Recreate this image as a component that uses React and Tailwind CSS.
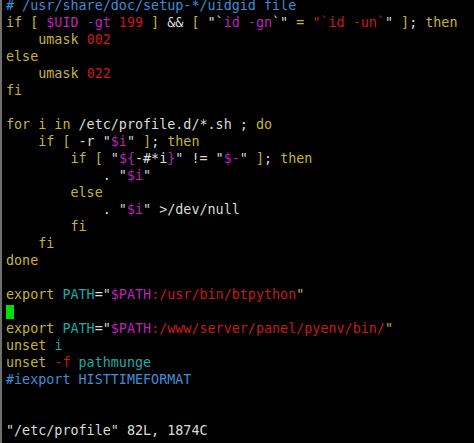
import React from 'react';

const C = {
  c: 'text-[#3d8fd8]',
  y: 'text-[#c8b432]',
  r: 'text-[#c81a1c]',
  m: 'text-[#bb22bb]',
  t: 'text-[#1fa8a8]',
  w: 'text-[#dcdcdc]',
};

const lines = [
  [['# /usr/share/doc/setup-*/uidgid file', 'c']],
  [['if [ ', 'y'], ['$UID -gt', 'm'], [' 199', 'r'], [' ] ', 'y'], ['&&', 'w'], [' [ ', 'y'], ['"`', 'w'], ['id -gn', 'm'], ['`"', 'w'], [' = ', 'y'], ['"`id -un`', 'r'], ['"', 'w'], [' ]', 'y'], ['; ', 'w'], ['then', 'y']],
  [['    umask ', 'y'], ['002', 'r']],
  [['else', 'y']],
  [['    umask ', 'y'], ['022', 'r']],
  [['fi', 'y']],
  [],
  [['for i in ', 'y'], ['/etc/profile.d/*.sh ; ', 'w'], ['do', 'y']],
  [['    if [ ', 'y'], ['-r "', 'w'], ['$i', 'm'], ['" ', 'w'], [']', 'y'], ['; ', 'w'], ['then', 'y']],
  [['        if [ ', 'y'], ['"', 'w'], ['${', 'm'], ['-#*i', 'w'], ['}', 'm'], ['" != "', 'w'], ['$-', 'm'], ['" ', 'w'], [']', 'y'], ['; ', 'w'], ['then', 'y']],
  [['            . "', 'w'], ['$i', 'm'], ['"', 'w']],
  [['        else', 'y']],
  [['            . "', 'w'], ['$i', 'm'], ['" >/dev/null', 'w']],
  [['        fi', 'y']],
  [['    fi', 'y']],
  [['done', 'y']],
  [],
  [['export ', 'y'], ['PATH', 't'], ['="', 'w'], ['$PATH', 'm'], [':/usr/bin/btpython', 'r'], ['"', 'y']],
  'cursor',
  [['export ', 'y'], ['PATH', 't'], ['="', 'w'], ['$PATH', 'm'], [':/www/server/panel/pyenv/bin/', 'r'], ['"', 'y']],
  [['unset ', 'y'], ['i', 't']],
  [['unset ', 'y'], ['-f', 'r'], [' pathmunge', 't']],
  [['#iexport HISTTIMEFORMAT', 'c']],
  [],
  [],
  [['"/etc/profile" 82L, 1874C', 'w']],
];

const App = () => {
  return (
    <div className="h-[443px] w-[474px] overflow-hidden bg-black border-l-2 border-[#707070]">
      <div className="-mt-[3px] pl-1 font-['DejaVu_Sans_Mono',monospace] text-[13.4px] leading-[17px]">
        {lines.map((line, i) =>
          line === 'cursor' ? (
            <div key={i} className="h-[17px] flex items-center">
              <span className="block w-[8px] h-[14px] bg-[#00e000]" />
            </div>
          ) : (
            <div key={i} className="h-[17px] whitespace-pre">
              {line.map(([text, k], j) => (
                <span key={j} className={C[k]}>{text}</span>
              ))}
            </div>
          )
        )}
      </div>
    </div>
  );
};

export default App;
